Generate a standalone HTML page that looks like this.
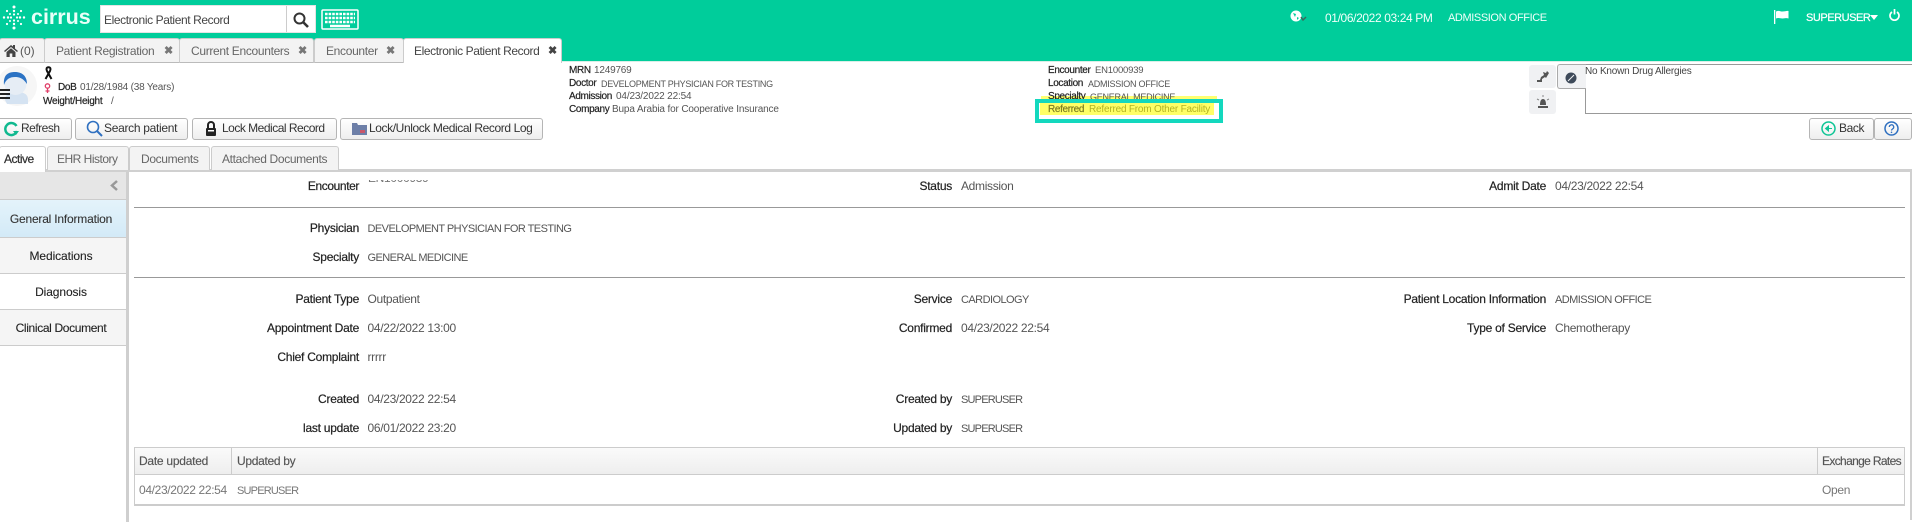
<!DOCTYPE html>
<html><head><meta charset="utf-8"><style>
html,body{margin:0;padding:0;background:#fff}
#p{position:relative;width:1912px;height:522px;overflow:hidden;background:#fff;font-family:"Liberation Sans",Arial,sans-serif;font-size:12px;color:#555}
#p div,#p svg{position:absolute}
.t{position:absolute;white-space:nowrap;line-height:16px}
.l{color:#222;-webkit-text-stroke:.2px #222;letter-spacing:-.25px}
.v{color:#555;letter-spacing:-.32px}
.c{font-size:11px;letter-spacing:-.55px}
.s{font-size:10px;letter-spacing:-.2px}
.s.l{letter-spacing:-.35px}
.sc{font-size:9px;letter-spacing:-.28px}
.g{color:#666;letter-spacing:-.32px}
.tab{top:38px;height:23px;background:#f3f3f3;border:1px solid #ccc;border-bottom:1px solid #bbb;border-radius:3px 3px 0 0;box-sizing:content-box}
.btn{top:118px;height:20px;background:linear-gradient(#fff,#eee);border:1px solid #b5b5b5;border-radius:3px}
.tb2{top:146px;height:23px;background:#f3f3f3;border:1px solid #ccc;border-bottom:0;border-radius:3px 3px 0 0}
.x{position:absolute;color:#777;font-size:11px;font-weight:bold;line-height:16px}
.side{left:0;width:126px;border-bottom:1px solid #ccc;box-sizing:border-box}
.hr{left:134px;width:1771px;height:1px;background:#999}
.ic{background:#f0f1f3;border-radius:3px}
.b{color:#333;letter-spacing:-.4px}
</style></head><body><div id="p">
<div style="left:0;top:0;width:1912px;height:61px;background:#00cd9b"></div>
<div style="left:0;top:61px;width:1912px;height:1px;background:#d8efe8"></div>

<svg style="left:2px;top:5px" width="24" height="25" viewBox="0 0 24 25" fill="#fff"><circle cx="12" cy="2" r="1.5"/><circle cx="12" cy="6" r="1.2"/><circle cx="12" cy="9.5" r="1.1"/><circle cx="12" cy="15.5" r="1.1"/><circle cx="12" cy="19" r="1.2"/><circle cx="12" cy="23" r="1.5"/><circle cx="2" cy="12.5" r="1.2"/><circle cx="6" cy="12.5" r="1.2"/><circle cx="9" cy="12.5" r="1.1"/><circle cx="15" cy="12.5" r="1.1"/><circle cx="18" cy="12.5" r="1.2"/><circle cx="22" cy="12.5" r="1.2"/><circle cx="5" cy="6" r="1.1"/><circle cx="8" cy="9" r="1"/><circle cx="19" cy="6" r="1.1"/><circle cx="16" cy="9" r="1"/><circle cx="5" cy="19" r="1.1"/><circle cx="8" cy="16" r="1"/><circle cx="19" cy="19" r="1.1"/><circle cx="16" cy="16" r="1"/></svg>
<span class="t" style="left:31px;top:4px;font-size:21.5px;line-height:26px;font-weight:bold;color:#e8fff8">cirrus</span>

<div style="left:100px;top:5px;width:216px;height:28px;background:#fff;border:1px solid #e4e4e4;box-sizing:border-box"></div>
<div style="left:286px;top:6px;width:1px;height:26px;background:#ccc"></div>
<span class="t" style="left:104px;top:12px;font-size:12px;color:#444;letter-spacing:-.4px">Electronic Patient Record</span>
<svg style="left:293px;top:12px" width="16" height="16" viewBox="0 0 16 16" fill="none" stroke="#333" stroke-width="2"><circle cx="6.5" cy="6.5" r="5"/><path d="M10.5 10.5L15 15" stroke-width="2.6"/></svg>
<svg style="left:321px;top:9px" width="38" height="21" viewBox="0 0 38 21"><rect x="1" y="1" width="36" height="19" rx="1" fill="none" stroke="#fff" stroke-width="1.5"/><path d="M4 5h30M4 9h30M4 13h30" stroke="#fff" stroke-width="2.4" stroke-dasharray="2.6 1"/><path d="M9 17h20" stroke="#fff" stroke-width="2.4"/></svg>

<div class="tab" style="left:-1px;width:44px"></div>
<div class="tab" style="left:44px;width:134px"></div>
<div class="tab" style="left:179px;width:133px"></div>
<div class="tab" style="left:314px;width:88px"></div>
<div class="tab" style="left:403px;width:157px;background:#fff;border-bottom:0;height:24px"></div>
<svg style="left:4px;top:44px" width="14" height="13" viewBox="0 0 14 13" fill="#444"><path d="M7 1L0 7l1 1 6-5 6 5 1-1-3-2.5V1H9v1.5zM2.5 8L7 4.3 11.5 8v5H8.3V9.5H5.7V13H2.500z"/></svg>
<span class="t" style="left:20px;top:43px">(0)</span>
<span class="t g" style="left:56px;top:43px">Patient Registration</span><span class="x" style="left:164px;top:43px">✖</span>
<span class="t g" style="left:191px;top:43px">Current Encounters</span><span class="x" style="left:298px;top:43px">✖</span>
<span class="t g" style="left:326px;top:43px">Encounter</span><span class="x" style="left:386px;top:43px">✖</span>
<span class="t" style="left:414px;top:43px;color:#444;letter-spacing:-.4px">Electronic Patient Record</span><span class="x" style="left:548px;top:43px;color:#444">✖</span>

<svg style="left:1289px;top:9px" width="20" height="14" viewBox="0 0 20 14"><circle cx="7" cy="7" r="5.500" fill="#fff"/><path d="M4 4l3 1-1 3zM8 8l2 1-2 2z" fill="#00cd9b"/><path d="M12 8l2 3 3-3" fill="none" stroke="#3a6a5c" stroke-width="1.500"/></svg>
<span class="t" style="left:1325px;top:10px;color:#f0fffa;letter-spacing:-.38px">01/06/2022 03:24 PM</span>
<span class="t" style="left:1448px;top:10px;color:#f0fffa;font-size:11px;letter-spacing:-.4px">ADMISSION OFFICE</span>
<svg style="left:1774px;top:10px" width="15" height="14" viewBox="0 0 15 14" fill="#fff"><rect x="0" y="0" width="1.300" height="14"/><path d="M2 1.500c3-1.500 4 0 6.500 0S13 .5 14.500 1v7.500c-2-.8-3.500 0-6 0s-3.500-1-6.500 0z"/></svg>
<span class="t" style="left:1806px;top:10px;color:#fff;font-size:11px;-webkit-text-stroke:.2px #fff;letter-spacing:-.45px">SUPERUSER</span>
<svg style="left:1870px;top:15px" width="8" height="5" viewBox="0 0 8 5" fill="#fff"><path d="M0 0h8L4 5z"/></svg>
<svg style="left:1889px;top:9px" width="11" height="12" viewBox="0 0 11 12" fill="none" stroke="#fff" stroke-width="1.700"><path d="M3 3a4.500 4.500 0 1 0 5 0"/><path d="M5.500 0v5.500"/></svg>

<svg style="left:0;top:64px" width="37" height="44" viewBox="0 0 37 44"><circle cx="17" cy="22" r="20" fill="#f6f6f6"/><path d="M5 36c1-7 5-8 11-8s12 1 12 8v4H7z" fill="#d5e3f2"/><circle cx="15.500" cy="20" r="11" fill="#e6edf5"/><path d="M4 21C3 10 9 8 15 8s12 3 12 12c-4-6-8-7-12-7-5 0-9 2-11 8z" fill="#2c73c4"/></svg>
<div style="left:0;top:89px;width:10px;height:1.500px;background:#222"></div><div style="left:0;top:93px;width:10px;height:1.500px;background:#222"></div><div style="left:0;top:97px;width:10px;height:1.500px;background:#222"></div>
<svg style="left:44px;top:66px" width="9" height="14" viewBox="0 0 9 14" fill="none" stroke="#111" stroke-width="2"><path d="M1.500 13L6 5C7 3 6.500 1.200 4.500 1.200S2 3 3 5l4.500 8"/></svg>
<svg style="left:44px;top:83px" width="7" height="10" viewBox="0 0 7 10" fill="none" stroke="#e0406a" stroke-width="1.300"><circle cx="3.500" cy="3" r="2.200"/><path d="M3.500 5.500V10M1.500 8h4"/></svg>
<span class="t s l" style="left:58px;top:80px">DoB</span>
<span class="t s v" style="left:80px;top:80px;letter-spacing:-.2px">01/28/1984 (38 Years)</span>
<span class="t s l" style="left:43px;top:94px;letter-spacing:-.25px">Weight/Height</span>
<span class="t s v" style="left:111px;top:94px">/</span>

<span class="t s l" style="left:569px;top:63px">MRN</span><span class="t s v" style="left:594px;top:63px;letter-spacing:-.2px">1249769</span>
<span class="t s l" style="left:569px;top:76px">Doctor</span><span class="t sc v" style="left:601px;top:76px;font-size:9px;letter-spacing:-.3px">DEVELOPMENT PHYSICIAN FOR TESTING</span>
<span class="t s l" style="left:569px;top:89px">Admission</span><span class="t s v" style="left:616px;top:89px;letter-spacing:-.15px">04/23/2022 22:54</span>
<span class="t s l" style="left:569px;top:102px">Company</span><span class="t s v" style="left:612px;top:102px;letter-spacing:-.15px">Bupa Arabia for Cooperative Insurance</span>
<span class="t s l" style="left:1048px;top:63px">Encounter</span><span class="t s v" style="left:1095px;top:63px;font-size:9.500px;letter-spacing:-.2px">EN1000939</span>
<span class="t s l" style="left:1048px;top:76px">Location</span><span class="t sc v" style="left:1088px;top:76px;font-size:9px;letter-spacing:-.25px">ADMISSION OFFICE</span>
<div style="left:1041px;top:96px;width:176px;height:3px;background:#ffff70"></div>
<span class="t s l" style="left:1048px;top:89px">Specialty</span><span class="t sc v" style="left:1090px;top:89px;font-size:9px;letter-spacing:-.25px">GENERAL MEDICINE</span>
<div style="left:1035px;top:99px;width:188px;height:24px;border:4px solid #13d8be;box-sizing:border-box;background:#fff"></div>
<div style="left:1040px;top:103px;width:174px;height:12px;background:#ffff66"></div>
<span class="t s" style="left:1048px;top:102px;color:#7c7c20;-webkit-text-stroke:.2px #7c7c20;letter-spacing:-.35px">Referred</span>
<span class="t s" style="left:1089px;top:102px;color:#b4b422;letter-spacing:-.2px">Referred From Other Facility</span>

<div class="ic" style="left:1529px;top:65px;width:27px;height:23px"></div>
<div class="ic" style="left:1529px;top:90px;width:27px;height:24px"></div>
<svg style="left:1536px;top:70px" width="14" height="14" viewBox="0 0 14 14" fill="#555"><path d="M1 12h5V9l3-2 1 1 3-5-2-2-1 2-3-1 1 3-3 2-1 3H1z"/></svg>
<svg style="left:1536px;top:95px" width="14" height="14" viewBox="0 0 14 14" fill="#555"><path d="M4 10c0-4 1-6 3-6s3 2 3 6zM2 11h10v2H2z"/><path d="M7 0v2M1 4l2 1M13 4l-2 1" stroke="#888" fill="none"/></svg>
<div style="left:1585px;top:64px;width:330px;height:50px;border:1px solid #999;box-sizing:border-box"></div>
<div style="left:1557px;top:64px;width:29px;height:25px;background:#f1f2f4;border:1px solid #aaa;border-right:0;border-radius:3px 0 0 3px;box-sizing:border-box"></div>
<svg style="left:1565px;top:72px" width="12" height="12" viewBox="0 0 12 12"><circle cx="6" cy="6" r="5.500" fill="#3e4a5a"/><path d="M3 9l6-6" stroke="#f1f2f4" stroke-width="1"/></svg>
<span class="t s" style="left:1585px;top:64px;color:#444">No Known Drug Allergies</span>

<div class="btn" style="left:-3px;width:73px"></div>
<div class="btn" style="left:75px;width:111px"></div>
<div class="btn" style="left:192px;width:143px"></div>
<div class="btn" style="left:340px;width:201px"></div>
<div class="btn" style="left:1809px;width:63px"></div>
<div class="btn" style="left:1874px;width:36px"></div>
<svg style="left:4px;top:121px" width="15" height="16" viewBox="0 0 15 16" fill="none"><path d="M12.500 5A6 6 0 1 0 13 10" stroke="#10b98f" stroke-width="2.500"/><path d="M9 10h6l-3 4z" fill="#10b98f"/></svg>
<span class="t b" style="left:21px;top:120px;letter-spacing:-.5px">Refresh</span>
<svg style="left:86px;top:120px" width="17" height="17" viewBox="0 0 17 17" fill="none" stroke="#2f70c0" stroke-width="1.600"><circle cx="7" cy="7" r="5.500"/><path d="M11 11l5 5" stroke-width="2"/></svg>
<span class="t b" style="left:104px;top:120px;letter-spacing:-.3px">Search patient</span>
<svg style="left:205px;top:120px" width="12" height="17" viewBox="0 0 12 17"><path d="M3 8V5a3 3 0 0 1 6 0v3" fill="none" stroke="#222" stroke-width="2"/><rect x="1" y="8" width="10" height="8" rx="1" fill="#222"/><rect x="3" y="10" width="6" height="1.500" fill="#fff"/></svg>
<span class="t b" style="left:222px;top:120px;letter-spacing:-.5px">Lock Medical Record</span>
<svg style="left:352px;top:122px" width="15" height="13" viewBox="0 0 15 13"><path d="M0 1h5l1 2h9v10H0z" fill="#6d7fa8"/><rect x="8" y="8" width="5" height="3" fill="#c9566a"/></svg>
<span class="t b" style="left:369px;top:120px;letter-spacing:-.4px">Lock/Unlock Medical Record Log</span>
<svg style="left:1821px;top:121px" width="15" height="15" viewBox="0 0 15 15" fill="none"><circle cx="7.500" cy="7.500" r="6.500" stroke="#10c596" stroke-width="1.500"/><path d="M11 7.500H7M7.500 5L4.500 7.500 7.500 10z" stroke="#10c596" fill="#10c596"/></svg>
<span class="t b" style="left:1839px;top:120px">Back</span>
<svg style="left:1884px;top:121px" width="15" height="15" viewBox="0 0 15 15" fill="none"><circle cx="7.500" cy="7.500" r="6.500" stroke="#2f70c0" stroke-width="1.500"/><path d="M5.300 6a2.200 2.200 0 1 1 3.300 1.900c-.8.500-1.100.8-1.100 1.600" stroke="#2f70c0" stroke-width="1.300"/><circle cx="7.500" cy="11.300" r=".8" fill="#2f70c0"/></svg>

<div style="left:0;top:169px;width:1912px;height:3px;background:#d0d0d0"></div>
<div class="tb2" style="left:-1px;width:45px;background:#fff;height:25px;z-index:2"></div>
<div class="tb2" style="left:47px;width:80px"></div>
<div class="tb2" style="left:129px;width:79px"></div>
<div class="tb2" style="left:211px;width:126px"></div>
<span class="t l" style="left:4px;top:151px;z-index:3;color:#333;letter-spacing:-.5px">Active</span>
<span class="t g" style="left:57px;top:151px;letter-spacing:-.5px">EHR History</span>
<span class="t g" style="left:141px;top:151px;letter-spacing:-.35px">Documents</span>
<span class="t g" style="left:222px;top:151px;letter-spacing:-.35px">Attached Documents</span>

<div style="left:126px;top:172px;width:3px;height:350px;background:#cfcfcf"></div>
<div class="side" style="top:172px;height:28px;background:#e6e6e6"></div>
<svg style="left:110px;top:180px" width="8" height="11" viewBox="0 0 8 11" fill="none" stroke="#999" stroke-width="2.500"><path d="M7 1L2 5.500 7 10"/></svg>
<div class="side" style="top:200px;height:38px;background:linear-gradient(#e4f3fb,#d3eaf7)"></div>
<div class="side" style="top:238px;height:36px;background:#f5f5f5"></div>
<div class="side" style="top:274px;height:36px;background:#fff"></div>
<div class="side" style="top:310px;height:36px;background:#f5f5f5"></div>
<span class="t l" style="left:0;width:122px;text-align:center;top:211px;color:#333;-webkit-text-stroke:.1px #333;letter-spacing:-.2px">General Information</span>
<span class="t l" style="left:0;width:122px;text-align:center;top:248px;-webkit-text-stroke:.1px #222;letter-spacing:-.1px">Medications</span>
<span class="t l" style="left:0;width:122px;text-align:center;top:284px;-webkit-text-stroke:.1px #222;letter-spacing:-.1px">Diagnosis</span>
<span class="t l" style="left:0;width:122px;text-align:center;top:320px;-webkit-text-stroke:.1px #222;letter-spacing:-.35px">Clinical Document</span>

<div class="hr" style="top:207px"></div>
<div class="hr" style="top:277px"></div>
<div style="left:1910px;top:172px;width:2px;height:348px;background:#d0d0d0"></div>

<span class="t l" style="right:1553px;top:178px;letter-spacing:-.4px">Encounter</span>
<div style="left:368px;top:180px;width:60px;height:3px;overflow:hidden"><span class="t v" style="left:0;top:-10px;color:#777">EN1000939</span></div>
<span class="t l" style="right:960px;top:178px">Status</span><span class="t v" style="left:961px;top:178px">Admission</span>
<span class="t l" style="right:366px;top:178px">Admit Date</span><span class="t v" style="left:1555px;top:178px">04/23/2022 22:54</span>

<span class="t l" style="right:1553px;top:220px">Physician</span><span class="t v c" style="left:367.500px;top:221px">DEVELOPMENT PHYSICIAN FOR TESTING</span>
<span class="t l" style="right:1553px;top:249px">Specialty</span><span class="t v c" style="left:367.500px;top:250px">GENERAL MEDICINE</span>

<span class="t l" style="right:1553px;top:291px">Patient Type</span><span class="t v" style="left:367.500px;top:291px">Outpatient</span>
<span class="t l" style="right:960px;top:291px">Service</span><span class="t v c" style="left:961px;top:292px">CARDIOLOGY</span>
<span class="t l" style="right:366px;top:291px">Patient Location Information</span><span class="t v c" style="left:1555px;top:292px">ADMISSION OFFICE</span>

<span class="t l" style="right:1553px;top:320px">Appointment Date</span><span class="t v" style="left:367.500px;top:320px">04/22/2022 13:00</span>
<span class="t l" style="right:960px;top:320px">Confirmed</span><span class="t v" style="left:961px;top:320px">04/23/2022 22:54</span>
<span class="t l" style="right:366px;top:320px">Type of Service</span><span class="t v" style="left:1555px;top:320px">Chemotherapy</span>

<span class="t l" style="right:1553px;top:349px">Chief Complaint</span><span class="t v" style="left:367.500px;top:349px">rrrrr</span>

<span class="t l" style="right:1553px;top:391px">Created</span><span class="t v" style="left:367.500px;top:391px">04/23/2022 22:54</span>
<span class="t l" style="right:960px;top:391px">Created by</span><span class="t v c" style="left:961px;top:392px;letter-spacing:-.8px">SUPERUSER</span>
<span class="t l" style="right:1553px;top:420px">last update</span><span class="t v" style="left:367.500px;top:420px">06/01/2022 23:20</span>
<span class="t l" style="right:960px;top:420px">Updated by</span><span class="t v c" style="left:961px;top:421px;letter-spacing:-.8px">SUPERUSER</span>

<div style="left:134px;top:447px;width:1771px;height:59px;border:1px solid #ccc;border-bottom-width:2px;box-sizing:border-box"></div>
<div style="left:135px;top:448px;width:1769px;height:27px;background:linear-gradient(#fafafa,#eee);border-bottom:1px solid #ccc;box-sizing:border-box"></div>
<div style="left:231px;top:448px;width:1px;height:27px;background:#ccc"></div>
<div style="left:1817px;top:448px;width:1px;height:27px;background:#ccc"></div>
<span class="t" style="left:139px;top:453px;color:#555;-webkit-text-stroke:.15px #555;letter-spacing:-.25px">Date updated</span>
<span class="t" style="left:237px;top:453px;color:#555;-webkit-text-stroke:.15px #555;letter-spacing:-.3px">Updated by</span>
<span class="t" style="left:1822px;top:453px;color:#555;-webkit-text-stroke:.15px #555;letter-spacing:-.65px">Exchange Rates</span>
<span class="t" style="left:139px;top:482px;color:#777;letter-spacing:-.35px">04/23/2022 22:54</span>
<span class="t" style="left:237px;top:483px;color:#777;font-size:11px;letter-spacing:-.8px">SUPERUSER</span>
<span class="t" style="left:1822px;top:482px;color:#777;letter-spacing:-.3px">Open</span>
</div></body></html>
